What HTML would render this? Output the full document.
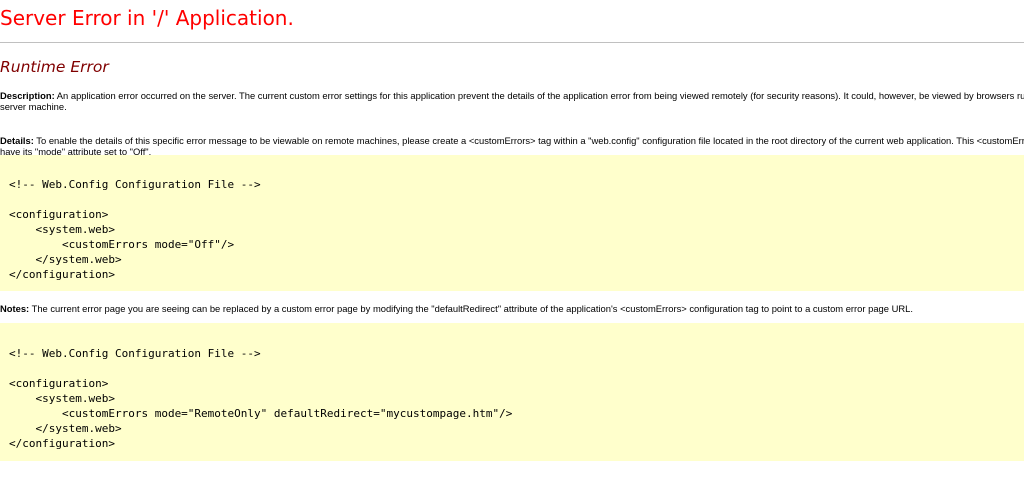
<!DOCTYPE html>
<html><head><meta charset="utf-8"><style>
html,body{margin:0;padding:0;background:#fff;width:1024px;height:480px;overflow:hidden;position:relative}
.a{position:absolute;left:0;width:1024px;overflow:hidden;white-space:nowrap}
h1{position:absolute;left:0;top:6px;margin:0;font:normal 20px "DejaVu Sans",sans-serif;color:#f00;white-space:nowrap}
hr{position:absolute;left:0;top:42px;width:1024px;margin:0;border:0;border-top:1px solid #c0c0c0}
h2{position:absolute;left:0;top:58px;margin:0;font:italic 15.5px "DejaVu Sans",sans-serif;color:#800000}
.t{font:9.4px/11px "Liberation Sans",Arial,sans-serif;color:#000}
.t b{font-weight:bold}
.box{position:absolute;left:0;width:1024px;background:#ffffcc}
pre{margin:0;position:absolute;left:9px;font:11px/15px "DejaVu Sans Mono",monospace;color:#000}
</style></head><body>
<h1>Server Error in '/' Application.</h1>
<hr>
<h2>Runtime Error</h2>
<div class="a t" style="top:90px"><b>Description:</b> An application error occurred on the server. The current custom error settings for this application prevent the details of the application error from being viewed remotely (for security reasons). It could, however, be viewed by browsers running on the local<br>server machine.</div>
<div class="a t" style="top:135px"><b>Details:</b> To enable the details of this specific error message to be viewable on remote machines, please create a &lt;customErrors&gt; tag within a "web.config" configuration file located in the root directory of the current web application. This &lt;customErrors&gt; tag should then<br>have its "mode" attribute set to "Off".</div>
<div class="box" style="top:155px;height:136px"><pre style="top:22px">&lt;!-- Web.Config Configuration File --&gt;

&lt;configuration&gt;
    &lt;system.web&gt;
        &lt;customErrors mode="Off"/&gt;
    &lt;/system.web&gt;
&lt;/configuration&gt;</pre></div>
<div class="a t" style="top:303px"><b>Notes:</b> The current error page you are seeing can be replaced by a custom error page by modifying the "defaultRedirect" attribute of the application's &lt;customErrors&gt; configuration tag to point to a custom error page URL.</div>
<div class="box" style="top:323px;height:138px"><pre style="top:23px">&lt;!-- Web.Config Configuration File --&gt;

&lt;configuration&gt;
    &lt;system.web&gt;
        &lt;customErrors mode="RemoteOnly" defaultRedirect="mycustompage.htm"/&gt;
    &lt;/system.web&gt;
&lt;/configuration&gt;</pre></div>
</body></html>
